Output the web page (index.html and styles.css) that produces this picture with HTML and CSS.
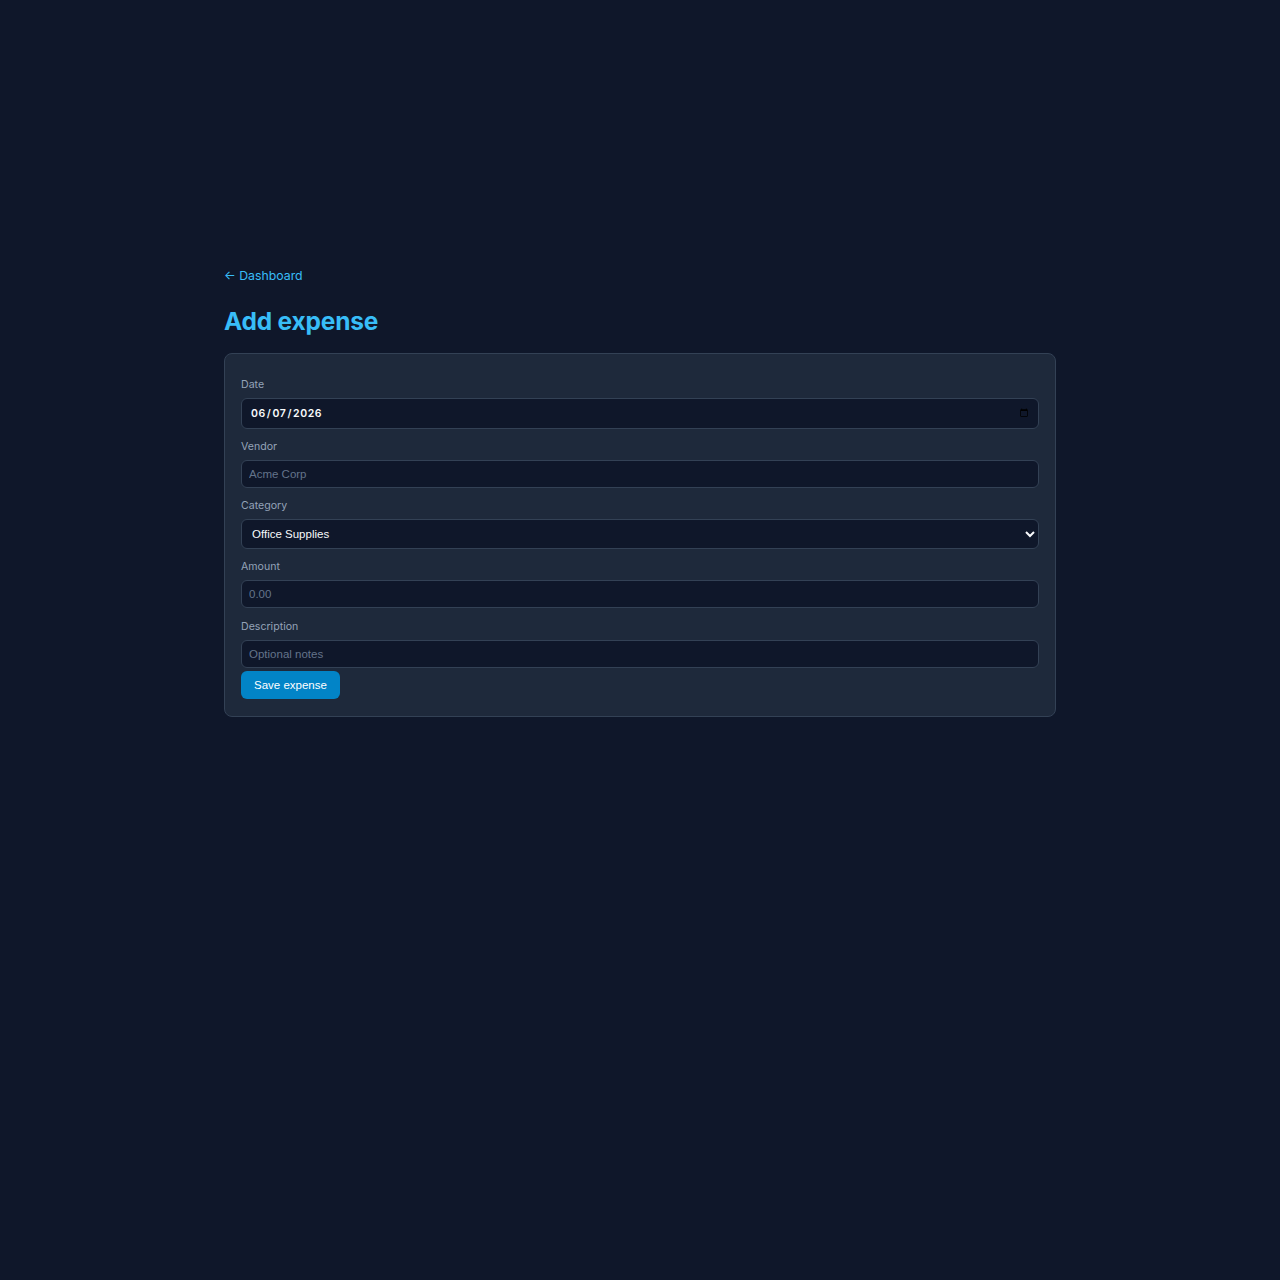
FILE: index.html
```html
<!DOCTYPE html>
<html lang="en">
<head>
  <meta charset="UTF-8">
  <title>Add expense</title>
  <link rel="stylesheet" href="styles.css">
</head>
<body>
  <main class="page">
    <a class="back" href="#">&larr; Dashboard</a>
    <h1>Add expense</h1>

    <form class="card">
      <label for="date">Date</label>
      <input id="date" class="date" type="date" value="2026-06-07">

      <label for="vendor">Vendor</label>
      <input id="vendor" type="text" placeholder="Acme Corp">

      <label for="category">Category</label>
      <select id="category">
        <option>Office Supplies</option>
        <option>Travel</option>
        <option>Meals</option>
        <option>Software</option>
      </select>

      <label for="amount">Amount</label>
      <input id="amount" class="amount" type="number" step="0.01" placeholder="0.00">

      <label for="description">Description</label>
      <input id="description" type="text" placeholder="Optional notes">

      <div>
        <button type="submit">Save expense</button>
      </div>
    </form>
  </main>
</body>
</html>
```

FILE: styles.css
```css
body {
  margin: 0;
  background: #0f172a;
  color: #e2e8f0;
  font-family: Inter, "Noto Sans", sans-serif;
}

.page {
  max-width: 832px;
  margin: 0 auto;
  padding-top: 264px;
}

.back {
  display: inline-block;
  color: #38bdf8;
  font-size: 12.3px;
  line-height: 18px;
  text-decoration: none;
}

h1 {
  margin: 20px 0 16px;
  color: #38bdf8;
  font-size: 24.5px;
  line-height: 32px;
  font-weight: 700;
  letter-spacing: -0.2px;
}

.card {
  display: flex;
  flex-direction: column;
  padding: 16px 16px 17px;
  background: #1e293b;
  border: 1px solid #334155;
  border-radius: 8px;
}

label {
  margin: 7px 0 5px;
  color: #94a3b8;
  font-size: 10.6px;
  line-height: 16px;
}

input, select {
  box-sizing: border-box;
  height: 28px;
  margin-bottom: 3px;
  padding: 0 7px;
  background: #0f172a;
  color: #f8fafc;
  border: 1px solid #334155;
  border-radius: 6px;
  font-family: "Liberation Sans", Arial, sans-serif;
  font-size: 11.5px;
}

input::placeholder {
  color: #64748b;
}

.date {
  height: 31px;
  padding-left: 8px;
  font-family: Inter, sans-serif;
  font-size: 10.5px;
  font-weight: 600;
  letter-spacing: 0.6px;
}

.amount {
  margin-bottom: 4px;
}

select {
  height: 30px;
  padding: 0 6px;
}

button {
  height: 28px;
  padding: 0 13px;
  background: #0284c7;
  color: #fff;
  border: 0;
  border-radius: 6px;
  font-family: "Liberation Sans", Arial, sans-serif;
  font-size: 11.5px;
  cursor: pointer;
}
```
